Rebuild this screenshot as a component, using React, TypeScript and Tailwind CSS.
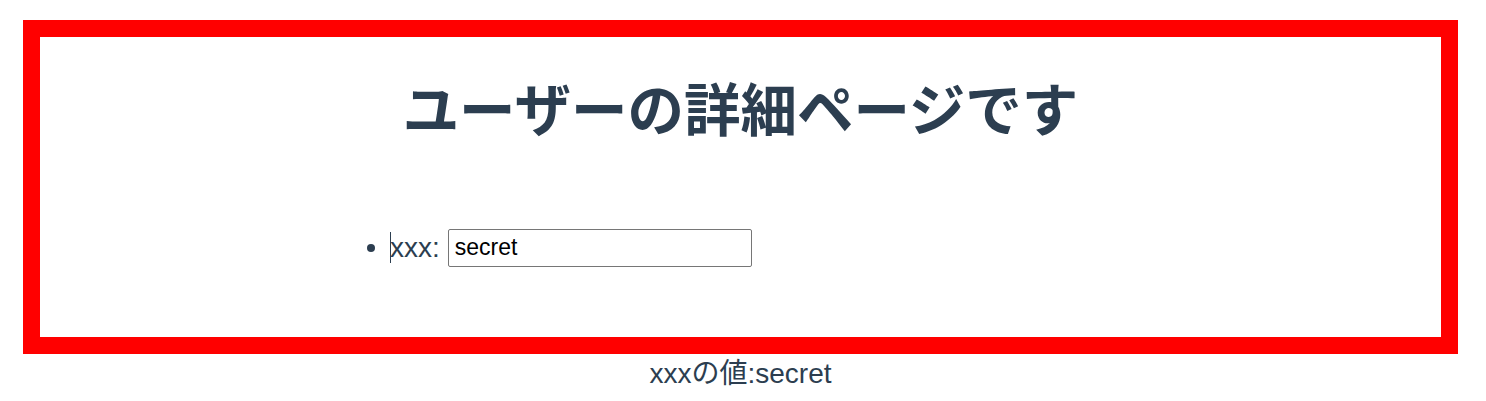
export default function App() {
  return (
    <div className="pt-[20px] pl-[23px] font-['Liberation_Sans','Noto_Sans_CJK_JP',sans-serif] text-[#2c3e50]">
      <div className="w-[1435px] h-[334px] border-[17px] border-[#ff0000] flex flex-col">
        <h1 className="mt-[41px] text-center text-[56.5px] leading-none font-bold font-['Noto_Sans_CJK_JP',sans-serif]">
          ユーザーの詳細ページです
        </h1>
        <ul className="mt-[94px] pl-[327px]">
          <li className="flex items-center h-[38px]">
            <span className="w-[8px] h-[8px] rounded-full bg-[#2c3e50]" />
            <span className="ml-[15px] w-px h-[31px] bg-[#2c3e50]" />
            <span className="text-[28px] leading-none -ml-px">xxx:</span>
            <input
              type="text"
              defaultValue="secret"
              className="ml-[8px] w-[304px] h-[38px] border border-[#767676] rounded-[2px] px-[6px] text-[23px] text-black bg-white outline-none font-['Liberation_Sans',sans-serif]"
            />
          </li>
        </ul>
      </div>
      <p className="w-[1435px] mt-[1px] text-center text-[28px] leading-[38px]">xxxの値:secret</p>
    </div>
  )
}
